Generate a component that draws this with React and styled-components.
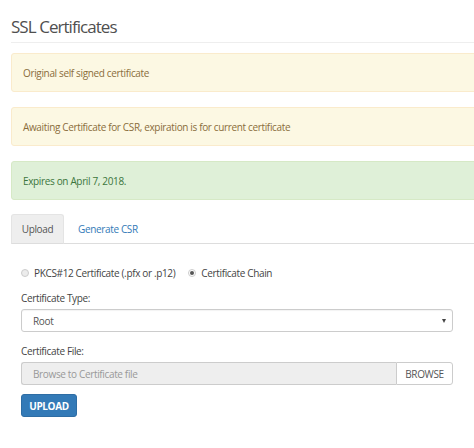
import React from "react";
import styled, { createGlobalStyle } from "styled-components";

const Global = createGlobalStyle`
  html, body { margin: 0; padding: 0; background: #fff; }
  body { font-family: "Open Sans", "Noto Sans", sans-serif; font-size: 10px; letter-spacing: -0.35px; color: #333; overflow: hidden; }
  * { box-sizing: border-box; }
`;

const Viewport = styled.div`
  width: 474px;
  height: 448px;
  overflow: hidden;
`;

const Page = styled.div`
  width: 500px;
  padding: 15px 0 0 11px;
  display: flex;
  flex-direction: column;
`;

const Title = styled.h1`
  margin: 0;
  font-size: 17px;
  font-weight: 400;
  letter-spacing: -0.95px;
  line-height: 23px;
  color: #4f4f4f;
  padding-bottom: 4px;
  border-bottom: 1px solid #eee;
`;

const Alerts = styled.div`
  display: flex;
  flex-direction: column;
  gap: 15px;
  margin-top: 10px;
`;

const Alert = styled.div`
  height: 39px;
  display: flex;
  align-items: center;
  padding: 0 11px;
  border: 1px solid ${(p) => (p.$kind === "success" ? "#d6e9c6" : "#faebcc")};
  background: ${(p) => (p.$kind === "success" ? "#dff0d8" : "#fcf8e3")};
  color: ${(p) => (p.$kind === "success" ? "#3c763d" : "#8a6d3b")};
  border-radius: 3px;
`;

const Tabs = styled.div`
  display: flex;
  margin-top: 14px;
  border-bottom: 1px solid #ddd;
  height: 30px;
`;

const Tab = styled.div`
  height: 30px;
  padding: 0 11px;
  display: flex;
  align-items: center;
  margin-bottom: -1px;
  border-radius: 3px 3px 0 0;
  ${(p) =>
    p.$active
      ? `background: #eee; color: #555; border: 1px solid #e4e4e4; border-bottom-color: #ddd; width: 53px; justify-content: center;`
      : `color: #337ab7; border: 1px solid transparent; padding-left: 13px;`}
`;

const Form = styled.div`
  display: flex;
  flex-direction: column;
  width: 432px;
  margin-left: 10px;
`;

const RadioRow = styled.div`
  display: flex;
  align-items: center;
  margin-top: 23px;
  height: 12px;
  gap: 13px;
`;

const RadioLabel = styled.label`
  display: flex;
  align-items: center;
  gap: 5px;
  color: #444;
`;

const Radio = styled.span`
  width: 8px;
  height: 8px;
  border-radius: 50%;
  border: 1px solid #ccc;
  background: ${(p) => (p.$checked ? "#fff" : "#ececec")};
  display: flex;
  align-items: center;
  justify-content: center;
  &::after {
    content: "";
    width: 4px;
    height: 4px;
    border-radius: 50%;
    background: ${(p) => (p.$checked ? "#555" : "transparent")};
  }
`;

const Label = styled.div`
  color: #444;
  margin-top: ${(p) => p.$mt || 0}px;
  line-height: 14px;
`;

const Select = styled.div`
  margin-top: 4px;
  height: 23px;
  border: 1px solid #ccc;
  border-radius: 3px;
  display: flex;
  align-items: center;
  justify-content: space-between;
  padding: 0 6px 0 11px;
  color: #555;
  background: #fff;
  box-shadow: inset 0 1px 1px rgba(0,0,0,0.05);
`;

const Caret = styled.span`
  width: 0;
  height: 0;
  border-left: 2.5px solid transparent;
  border-right: 2.5px solid transparent;
  border-top: 4px solid #444;
`;

const FileGroup = styled.div`
  margin-top: 4px;
  height: 23px;
  display: flex;
`;

const FileInput = styled.div`
  flex: 1;
  border: 1px solid #ccc;
  border-right: none;
  border-radius: 3px 0 0 3px;
  background: #eee;
  color: #999;
  display: flex;
  align-items: center;
  padding-left: 11px;
`;

const Browse = styled.div`
  width: 57px;
  border: 1px solid #ccc;
  border-radius: 0 3px 3px 0;
  background: #fff;
  color: #555;
  display: flex;
  align-items: center;
  justify-content: center;
`;

const Button = styled.button`
  margin-top: 9px;
  align-self: flex-start;
  width: 56px;
  height: 23px;
  border: 1px solid #2e6da4;
  background: #337ab7;
  border-radius: 3px;
  color: #fff;
  font-family: inherit;
  font-size: 10px;
  letter-spacing: -0.35px;
  font-weight: 700;
  padding: 0;
`;

export default function App() {
  return (
    <Viewport>
      <Global />
      <Page>
        <Title>SSL Certificates</Title>
        <Alerts>
          <Alert>Original self signed certificate</Alert>
          <Alert>Awaiting Certificate for CSR, expiration is for current certificate</Alert>
          <Alert $kind="success">Expires on April 7, 2018.</Alert>
        </Alerts>
        <Tabs>
          <Tab $active>Upload</Tab>
          <Tab>Generate CSR</Tab>
        </Tabs>
        <Form>
          <RadioRow>
            <RadioLabel><Radio />PKCS#12 Certificate (.pfx or .p12)</RadioLabel>
            <RadioLabel><Radio $checked />Certificate Chain</RadioLabel>
          </RadioRow>
          <Label $mt={12}>Certificate Type:</Label>
          <Select>
            <span>Root</span>
            <Caret />
          </Select>
          <Label $mt={12}>Certificate File:</Label>
          <FileGroup>
            <FileInput>Browse to Certificate file</FileInput>
            <Browse>BROWSE</Browse>
          </FileGroup>
          <Button>UPLOAD</Button>
        </Form>
      </Page>
    </Viewport>
  );
}
